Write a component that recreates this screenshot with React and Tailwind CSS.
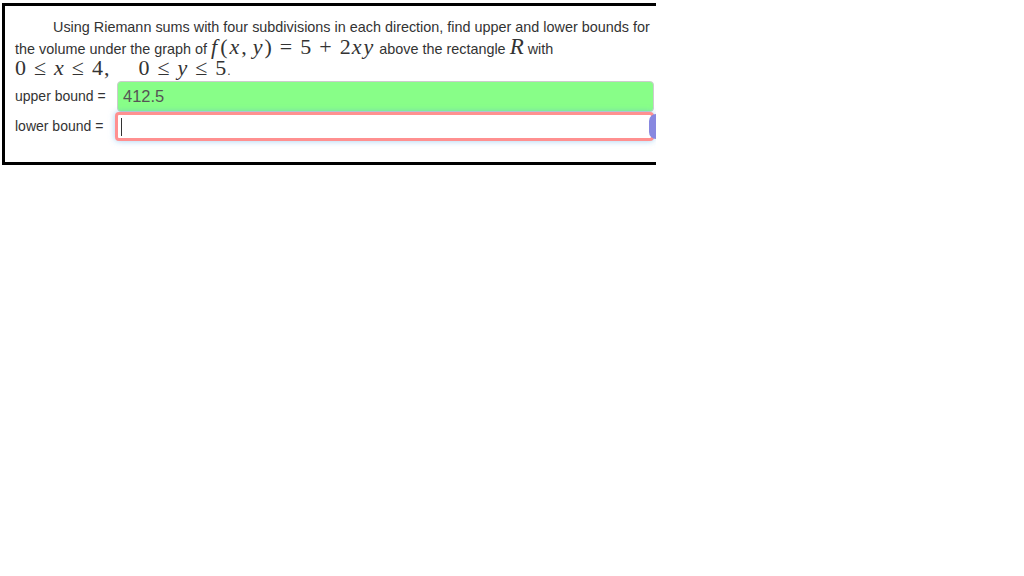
import React from 'react';

const serif = { fontFamily: '"Liberation Serif", "DejaVu Serif", serif' };

const M = ({ children, className = '' }) => (
  <span className={`italic ${className}`} style={serif}>
    {children}
  </span>
);
const R = ({ children, className = '' }) => (
  <span className={className} style={serif}>
    {children}
  </span>
);
// relation / binary operator with KaTeX-like spacing
const Op = ({ children, className = 'mx-[7px]' }) => (
  <span className={className} style={serif}>
    {children}
  </span>
);

export default function App() {
  return (
    <div className="w-[1024px] h-[576px] bg-white" style={{ fontFamily: '"Liberation Sans", Arial, sans-serif' }}>
      <div className="ml-[2px] pt-[3px]">
        <div className="relative w-[654px] h-[162px] border-l-[3px] border-t-[3px] border-b-[3px] border-black overflow-hidden">
          <div className="pl-[10px] pr-[2px] pt-[12px] text-[14.4px] text-[#333]">
            <p className="leading-[18px] indent-[38px] whitespace-nowrap">
              Using Riemann sums with four subdivisions in each direction, find upper and lower bounds for
            </p>
            <p className="leading-[20px] mt-[1px] whitespace-nowrap">
              the volume under the graph of{' '}
              <span className="text-[22px] tracking-[1px]">
                <M className="mr-[2px]">f</M>
                <R>(</R>
                <M className="mx-[1px]">x</M>
                <R className="mr-[5px]">,</R>
                <M className="mr-[1px]">y</M>
                <R>)</R>
                <Op>=</Op>
                <R>5</R>
                <Op>+</Op>
                <R>2</R>
                <M className="tracking-[2px]">xy</M>
              </span>{' '}
              above the rectangle <M className="text-[23px]">R</M> with
            </p>
            <p className="leading-[17px] text-[22px] whitespace-nowrap tracking-[1px]">
              <R>0</R>
              <Op>≤</Op>
              <M>x</M>
              <Op>≤</Op>
              <R>4,</R>
              <span className="inline-block w-[28px]" />
              <R>0</R>
              <Op>≤</Op>
              <M>y</M>
              <Op>≤</Op>
              <R>5</R>
              <span className="text-[12px]">.</span>
            </p>
          </div>

          <div className="flex items-center pl-[10px] mt-[1px]">
            <span className="w-[102px] text-[14px] text-[#333]">upper bound =</span>
            <div className="flex-1 h-[31px] bg-[#88fe88] border border-[#ccc] rounded-[4px] flex items-center pl-[5px] text-[16.5px] text-[#555] mr-[2px]">
              412.5
            </div>
          </div>

          <div className="flex items-center pl-[10px]">
            <span className="w-[100px] text-[14px] text-[#333]">lower bound =</span>
            <div className="relative flex-1 h-[29px] bg-white border-[3px] border-[#ff9090] rounded-[4px] shadow-[0_0_6px_rgba(102,175,233,0.6)] flex items-center pl-[3px] mr-[2px]">
              <span className="w-[1px] h-[18px] bg-[#333]" />
            </div>
            <span className="absolute right-[-7px] w-[14px] h-[25px] rounded-full bg-[#8888e0]" />
          </div>
        </div>
      </div>
    </div>
  );
}
